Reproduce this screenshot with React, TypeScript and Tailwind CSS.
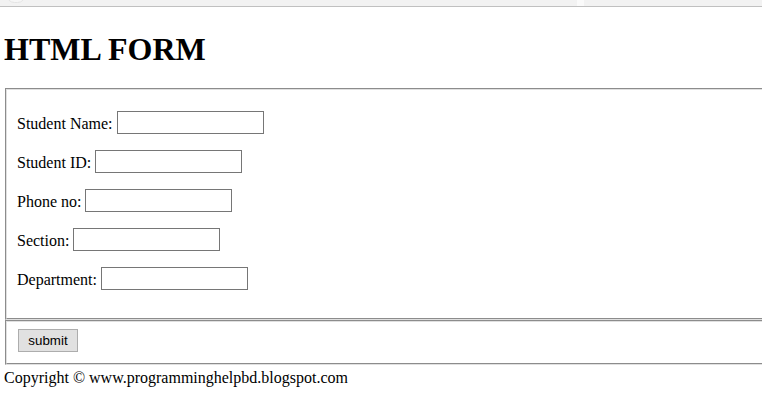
import React from "react";

const serif = "font-['Liberation_Serif','Times_New_Roman',serif]";

function Row({ label }: { label: string }) {
  return (
    <div className="flex items-start h-[23px]">
      <span className="mt-[4px] leading-[18px] text-[16px] whitespace-pre">{label}</span>
      <input
        type="text"
        className="ml-[4px] w-[147px] h-[23px] border border-[#767676] bg-white px-[2px] text-[13.33px] font-['Liberation_Sans',Arial,sans-serif] outline-none"
      />
    </div>
  );
}

export default function App() {
  return (
    <div className={`w-[762px] h-[400px] overflow-hidden bg-white text-black ${serif}`}>
      <div className="relative h-[7px] bg-[#f2f2f2] border-b border-[#c0c0c0]">
        <div className="absolute left-[577px] top-0 w-[7px] h-[6px] bg-[#fafafa]" />
        <div className="absolute left-[6px] top-[-14px] w-[20px] h-[17px] rounded-full border border-[#e4e4e4] bg-[#f6f6f6]" />
      </div>
      <div className="px-[4px]">
        <h1 className="mt-[24px] mb-[21px] text-[32px] leading-[36px] font-bold">HTML FORM</h1>
        <form onSubmit={(e) => e.preventDefault()}>
          <fieldset className="ml-[1px] w-[800px] border-2 [border-style:groove] border-[#e0e0e0] pl-[10px] pt-[21px] pb-[28px] flex flex-col gap-[16px]">
            <Row label="Student Name:" />
            <Row label="Student ID:" />
            <Row label="Phone no:" />
            <Row label="Section:" />
            <Row label="Department:" />
          </fieldset>
          <fieldset className="ml-[1px] w-[800px] border-2 [border-style:groove] border-[#e0e0e0] pl-[11px] pt-[7px] pb-[11px]">
            <button
              type="submit"
              className="block w-[60px] h-[23px] bg-[#e1e1e1] border border-[#adadad] text-[13.33px] leading-[15px] font-['Liberation_Sans',Arial,sans-serif] text-black"
            >
              submit
            </button>
          </fieldset>
        </form>
        <p className="mt-[4px] text-[16px] leading-[18px]">Copyright © www.programminghelpbd.blogspot.com</p>
      </div>
    </div>
  );
}
